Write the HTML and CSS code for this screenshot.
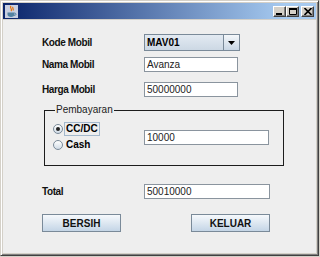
FILE: index.html
```html
<!DOCTYPE html>
<html>
<head>
<meta charset="utf-8">
<link rel="stylesheet" href="styles.css">
</head>
<body>
<div class="window">
  <div class="titlebar">
    <svg class="app-icon" viewBox="0 0 13 13" width="13" height="13">
      <rect x="0" y="0" width="13" height="13" fill="#c9cfe0"/>
      <path d="M6 1 C4 3 8 4 6 6 M8 2 C7 3 9 4 8 5.5" stroke="#e76f00" stroke-width="1.2" fill="none"/>
      <path d="M2.5 7.5 H9.5 V9.5 C9.5 11 8 12 6 12 C4 12 2.5 11 2.5 9.5 Z" fill="#5382a1"/>
      <path d="M9.5 8 C11.5 8 11.5 10.5 9.2 10.5" stroke="#5382a1" stroke-width="1" fill="none"/>
    </svg>
    <div class="title-buttons">
      <span class="tbtn"><svg viewBox="0 0 7 7" width="7" height="7"><rect x="0" y="5" width="6" height="2" fill="#000"/></svg></span>
      <span class="tbtn"><svg viewBox="0 0 8 7" width="8" height="7"><path d="M0.5 1.5 H7.5 V6.5 H0.5 Z" fill="none" stroke="#000" stroke-width="1"/><rect x="0" y="0" width="8" height="2" fill="#000"/></svg></span>
      <span class="tbtn close"><svg viewBox="0 0 8 7" width="8" height="7"><path d="M0.5 0 L7.5 7 M7.5 0 L0.5 7" stroke="#000" stroke-width="1.6"/></svg></span>
    </div>
  </div>
  <div class="content">
    <div class="row row-kode">
      <span class="lbl">Kode Mobil</span>
      <div class="combo">
        <span class="combo-value">MAV01</span>
        <span class="combo-btn"><svg viewBox="0 0 7 4" width="7" height="4"><path d="M0 0 H7 L3.5 4 Z" fill="#000"/></svg></span>
      </div>
    </div>
    <div class="row row-nama">
      <span class="lbl">Nama Mobil</span>
      <div class="field w-short">Avanza</div>
    </div>
    <div class="row row-harga">
      <span class="lbl">Harga Mobil</span>
      <div class="field w-short">50000000</div>
    </div>
    <fieldset class="group">
      <legend>Pembayaran</legend>
      <div class="group-body">
        <div class="radios">
          <div class="radio-item"><span class="radio checked"></span><span class="radio-text focus">CC/DC</span></div>
          <div class="radio-item"><span class="radio"></span><span class="radio-text">Cash</span></div>
        </div>
        <div class="field w-pay">10000</div>
      </div>
    </fieldset>
    <div class="row row-total">
      <span class="lbl">Total</span>
      <div class="field w-total">50010000</div>
    </div>
    <div class="buttons">
      <span class="btn">BERSIH</span>
      <span class="btn btn-keluar">KELUAR</span>
    </div>
  </div>
</div>
</body>
</html>
```
FILE: styles.css
```css
* { box-sizing: border-box; }
html, body { margin: 0; padding: 0; }
body {
  width: 320px;
  height: 257px;
  overflow: hidden;
  background: #d4d0c8;
  font-family: "Liberation Sans", Arial, sans-serif;
  font-size: 10px;
  color: #000;
}
.window {
  width: 319px;
  height: 256px;
  border: 1px solid;
  border-color: #d4d0c8 #404040 #404040 #d4d0c8;
  box-shadow: inset 1px 1px 0 #ffffff, inset -1px -1px 0 #808080;
  padding: 2px;
  background: #d4d0c8;
  display: flex;
  flex-direction: column;
}
.titlebar {
  height: 16px;
  flex: none;
  background: linear-gradient(to right, #0a246a 0%, #a6caf0 90%);
  display: flex;
  align-items: center;
  padding: 0 2px 0 2px;
}
.app-icon { display: block; }
.title-buttons { margin-left: auto; display: flex; }
.tbtn {
  width: 13px;
  height: 11px;
  background: #d4d0c8;
  border: 1px solid;
  border-color: #ffffff #404040 #404040 #ffffff;
  box-shadow: inset -1px -1px 0 #808080;
  display: flex;
  align-items: center;
  justify-content: center;
}
.tbtn svg { display: block; }
.tbtn.close { margin-left: 2px; }
.content {
  flex: 1;
  background: #eeeeee;
  margin-top: 1px;
  padding: 14px 0 0 39px;
}
.row { display: flex; align-items: center; }
.row-nama { margin-top: 6px; }
.row-harga { margin-top: 10px; }
.row-total { margin-top: 18px; }
.lbl {
  width: 102px;
  font-weight: bold;
  letter-spacing: -0.4px;
  color: #111;
}
.combo {
  width: 96px;
  height: 17px;
  border: 1px solid #7a8a99;
  display: flex;
  background: linear-gradient(#e3eaf2, #ccd8e4);
}
.combo-value {
  flex: 1;
  font-weight: bold;
  line-height: 15px;
  padding-left: 2px;
}
.combo-btn {
  width: 16px;
  border-left: 1px solid #7a8a99;
  display: flex;
  align-items: center;
  justify-content: center;
  background: linear-gradient(#f4f7fa, #c8d6e4);
}
.combo-btn svg { display: block; }
.field {
  height: 15px;
  border: 1px solid #8a949e;
  background: #ffffff;
  line-height: 13px;
  padding-left: 2px;
  color: #222;
}
.w-short { width: 94px; }
.w-pay { width: 125px; }
.w-total { width: 126px; }
.group {
  width: 240px;
  margin: 7px 0 0 2px;
  padding: 5px 0 12px 8px;
  border: 1px solid #1c1c1c;
}
.group legend {
  padding: 0 1px;
  margin-left: 2px;
  line-height: 12px;
  color: #222;
}
.group-body { display: flex; align-items: center; }
.radios { width: 91px; display: flex; flex-direction: column; }
.radio-item { height: 16px; display: flex; align-items: center; }
.radio {
  width: 10px;
  height: 10px;
  border-radius: 50%;
  border: 1px solid #7a8a99;
  background: linear-gradient(#ffffff, #d0dbe6);
  margin-right: 1px;
  display: flex;
  align-items: center;
  justify-content: center;
}
.radio.checked::after {
  content: "";
  width: 4px;
  height: 4px;
  border-radius: 50%;
  background: #222;
}
.radio-text {
  font-weight: bold;
  padding: 0 1px;
  border: 1px solid transparent;
  line-height: 12px;
}
.radio-text.focus { border-color: #a3b8cc; }
.buttons { display: flex; margin-top: 15px; }
.btn {
  width: 79px;
  height: 18px;
  border: 1px solid #7a8a99;
  background: linear-gradient(#f6f9fc, #c4d5e6);
  font-weight: bold;
  display: flex;
  align-items: center;
  justify-content: center;
  color: #111;
}
.btn-keluar { margin-left: 70px; }
```
